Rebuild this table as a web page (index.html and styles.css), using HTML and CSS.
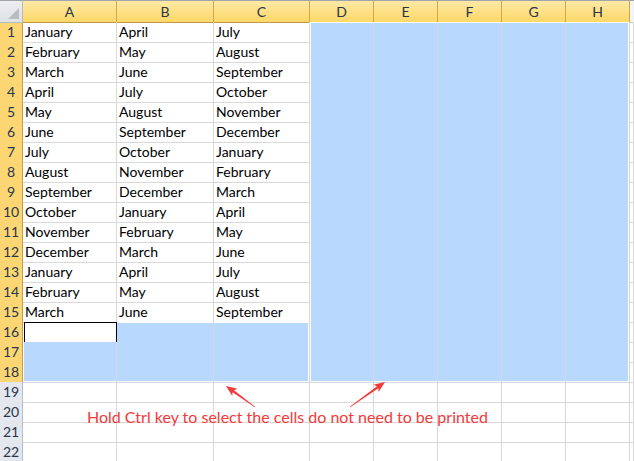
FILE: index.html
```html
<!DOCTYPE html>
<html>
<head>
<meta charset="utf-8">
<link rel="stylesheet" href="styles.css">
</head>
<body>
<div class="sheet">
  <div class="row head">
    <div class="corner"><span class="tri"></span></div>
    <div class="ch">A</div><div class="ch">B</div><div class="ch">C</div><div class="ch">D</div><div class="ch">E</div><div class="ch">F</div><div class="ch">G</div><div class="ch">H</div><div class="ch rest"></div>
  </div>
  <div class="row"><div class="rh on">1</div><div class="c">January</div><div class="c">April</div><div class="c">July</div><div class="c sel et el"></div><div class="c sel et"></div><div class="c sel et"></div><div class="c sel et"></div><div class="c sel et er"></div><div class="c"></div></div>
  <div class="row"><div class="rh on">2</div><div class="c">February</div><div class="c">May</div><div class="c">August</div><div class="c sel el"></div><div class="c sel"></div><div class="c sel"></div><div class="c sel"></div><div class="c sel er"></div><div class="c"></div></div>
  <div class="row"><div class="rh on">3</div><div class="c">March</div><div class="c">June</div><div class="c">September</div><div class="c sel el"></div><div class="c sel"></div><div class="c sel"></div><div class="c sel"></div><div class="c sel er"></div><div class="c"></div></div>
  <div class="row"><div class="rh on">4</div><div class="c">April</div><div class="c">July</div><div class="c">October</div><div class="c sel el"></div><div class="c sel"></div><div class="c sel"></div><div class="c sel"></div><div class="c sel er"></div><div class="c"></div></div>
  <div class="row"><div class="rh on">5</div><div class="c">May</div><div class="c">August</div><div class="c">November</div><div class="c sel el"></div><div class="c sel"></div><div class="c sel"></div><div class="c sel"></div><div class="c sel er"></div><div class="c"></div></div>
  <div class="row"><div class="rh on">6</div><div class="c">June</div><div class="c">September</div><div class="c">December</div><div class="c sel el"></div><div class="c sel"></div><div class="c sel"></div><div class="c sel"></div><div class="c sel er"></div><div class="c"></div></div>
  <div class="row"><div class="rh on">7</div><div class="c">July</div><div class="c">October</div><div class="c">January</div><div class="c sel el"></div><div class="c sel"></div><div class="c sel"></div><div class="c sel"></div><div class="c sel er"></div><div class="c"></div></div>
  <div class="row"><div class="rh on">8</div><div class="c">August</div><div class="c">November</div><div class="c">February</div><div class="c sel el"></div><div class="c sel"></div><div class="c sel"></div><div class="c sel"></div><div class="c sel er"></div><div class="c"></div></div>
  <div class="row"><div class="rh on">9</div><div class="c">September</div><div class="c">December</div><div class="c">March</div><div class="c sel el"></div><div class="c sel"></div><div class="c sel"></div><div class="c sel"></div><div class="c sel er"></div><div class="c"></div></div>
  <div class="row"><div class="rh on">10</div><div class="c">October</div><div class="c">January</div><div class="c">April</div><div class="c sel el"></div><div class="c sel"></div><div class="c sel"></div><div class="c sel"></div><div class="c sel er"></div><div class="c"></div></div>
  <div class="row"><div class="rh on">11</div><div class="c">November</div><div class="c">February</div><div class="c">May</div><div class="c sel el"></div><div class="c sel"></div><div class="c sel"></div><div class="c sel"></div><div class="c sel er"></div><div class="c"></div></div>
  <div class="row"><div class="rh on">12</div><div class="c">December</div><div class="c">March</div><div class="c">June</div><div class="c sel el"></div><div class="c sel"></div><div class="c sel"></div><div class="c sel"></div><div class="c sel er"></div><div class="c"></div></div>
  <div class="row"><div class="rh on">13</div><div class="c">January</div><div class="c">April</div><div class="c">July</div><div class="c sel el"></div><div class="c sel"></div><div class="c sel"></div><div class="c sel"></div><div class="c sel er"></div><div class="c"></div></div>
  <div class="row"><div class="rh on">14</div><div class="c">February</div><div class="c">May</div><div class="c">August</div><div class="c sel el"></div><div class="c sel"></div><div class="c sel"></div><div class="c sel"></div><div class="c sel er"></div><div class="c"></div></div>
  <div class="row"><div class="rh on">15</div><div class="c">March</div><div class="c">June</div><div class="c">September</div><div class="c sel el"></div><div class="c sel"></div><div class="c sel"></div><div class="c sel"></div><div class="c sel er"></div><div class="c"></div></div>
  <div class="row"><div class="rh on">16</div><div class="c act"></div><div class="c sel et"></div><div class="c sel et er"></div><div class="c sel el"></div><div class="c sel"></div><div class="c sel"></div><div class="c sel"></div><div class="c sel er"></div><div class="c"></div></div>
  <div class="row"><div class="rh on">17</div><div class="c sel el"></div><div class="c sel"></div><div class="c sel er"></div><div class="c sel el"></div><div class="c sel"></div><div class="c sel"></div><div class="c sel"></div><div class="c sel er"></div><div class="c"></div></div>
  <div class="row"><div class="rh on">18</div><div class="c sel el eb"></div><div class="c sel eb"></div><div class="c sel er eb"></div><div class="c sel el eb"></div><div class="c sel eb"></div><div class="c sel eb"></div><div class="c sel eb"></div><div class="c sel er eb"></div><div class="c"></div></div>
  <div class="row"><div class="rh">19</div><div class="c"></div><div class="c"></div><div class="c"></div><div class="c"></div><div class="c"></div><div class="c"></div><div class="c"></div><div class="c"></div><div class="c"></div></div>
  <div class="row"><div class="rh">20</div><div class="c"></div><div class="c"></div><div class="c"></div><div class="c"></div><div class="c"></div><div class="c"></div><div class="c"></div><div class="c"></div><div class="c"></div></div>
  <div class="row"><div class="rh">21</div><div class="c"></div><div class="c"></div><div class="c"></div><div class="c"></div><div class="c"></div><div class="c"></div><div class="c"></div><div class="c"></div><div class="c"></div></div>
  <div class="row"><div class="rh">22</div><div class="c"></div><div class="c"></div><div class="c"></div><div class="c"></div><div class="c"></div><div class="c"></div><div class="c"></div><div class="c"></div><div class="c"></div></div>

  <p class="note">Hold Ctrl key to select the cells do not need to be printed</p>
  <svg class="arrows" width="634" height="461" viewBox="0 0 634 461">
    <polygon points="255.2,406.8 234.0,390.3 237.5,388.8 226,386 232.3,396.1 232.6,392.3 254.8,407.2" fill="#f23a3a"/>
    <polygon points="350.2,407.2 378.4,388.2 378.6,392.1 385,382 373.4,384.7 377.0,386.2 349.8,406.8" fill="#f23a3a"/>
  </svg>
</div>
</body>
</html>
```
FILE: styles.css
```css
html, body {
  margin: 0;
  padding: 0;
  background: #fff;
}
.sheet {
  position: relative;
  width: 634px;
  height: 461px;
  overflow: hidden;
  font-family: Lato, "Open Sans", sans-serif;
  font-size: 14px;
  color: #000;
}
.row {
  display: grid;
  grid-template-columns: 23px 94px 97px 96px 64px 64px 64px 64px 64px 1fr;
  height: 20px;
}
.row.head {
  height: 22px;
}
.corner {
  position: relative;
  box-sizing: border-box;
  border-top: 1px solid #a0a4a9;
  border-right: 1px solid #b7bcc2;
  border-bottom: 1px solid #b7bcc2;
  background: linear-gradient(#eceef0, #dfe2e6);
}
.tri {
  position: absolute;
  right: 3px;
  bottom: 3px;
  width: 0;
  height: 0;
  border-left: 11px solid transparent;
  border-bottom: 11px solid #b9bcc0;
}
.ch {
  box-sizing: border-box;
  border-top: 1px solid #a0a4a9;
  border-right: 1px solid #d7a64c;
  border-bottom: 1px solid #c39a45;
  background: linear-gradient(#fee9a5, #fdd868);
  color: #27364a;
  text-align: center;
  line-height: 21px;
  font-size: 14px;
}
.ch.rest {
  background: #f3f4f6;
  border-right: none;
  border-bottom: 1px solid #c9cdd2;
}
.rh {
  box-sizing: border-box;
  border-right: 1px solid #b8bec6;
  border-bottom: 1px solid #c9ced5;
  background: #e4e8ee;
  color: #27364a;
  text-align: center;
  line-height: 20px;
  font-size: 14px;
}
.rh.on {
  background: #fdd674;
  border-right: 1px solid #c99c45;
  border-bottom: 1px solid #e3b458;
}
.c {
  position: relative;
  box-sizing: border-box;
  border-right: 1px solid #d9d9d9;
  border-bottom: 1px solid #d9d9d9;
  padding: 0 0 0 2px;
  line-height: 19px;
  white-space: nowrap;
  overflow: hidden;
}
.sel {
  background: #b8d9fd;
  border-color: #d2d8df;
  box-shadow: var(--t, 0 0 transparent), var(--b, 0 0 transparent), var(--l, 0 0 transparent), var(--r, 0 0 transparent);
}
.et { --t: inset 0 1px #fff; }
.eb { --b: inset 0 -1px #fff; }
.el { --l: inset 1px 0 #fff; }
.er { --r: inset -1px 0 #fff; }
.act {
  overflow: visible;
}
.act::after {
  content: "";
  position: absolute;
  left: 1px;
  top: 0;
  right: -1px;
  bottom: -1px;
  border: 1px solid #000;
}
.note {
  position: absolute;
  left: 87px;
  top: 409px;
  margin: 0;
  font-family: Lato, "Noto Sans", sans-serif;
  font-size: 16px;
  line-height: 16px;
  color: #f23a3a;
  white-space: nowrap;
}
.arrows {
  position: absolute;
  left: 0;
  top: 0;
  pointer-events: none;
}
```
